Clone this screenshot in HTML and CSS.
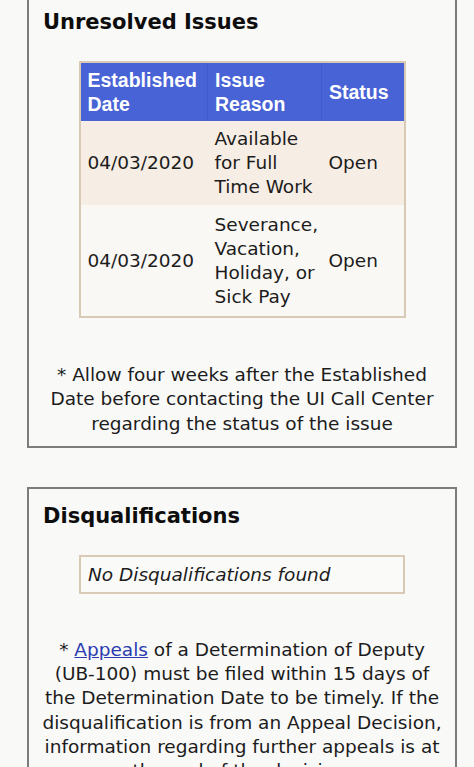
FILE: index.html
```html
<!DOCTYPE html>
<html lang="en">
<head>
<meta charset="utf-8">
<title>Claim Status</title>
<link rel="stylesheet" href="styles.css">
</head>
<body>
<div class="page">
  <section class="panel">
    <h2 class="panel-title">Unresolved Issues</h2>
    <table class="issues">
      <colgroup>
        <col class="c1"><col class="c2"><col class="c3">
      </colgroup>
      <thead>
        <tr>
          <th>Established Date</th>
          <th>Issue Reason</th>
          <th>Status</th>
        </tr>
      </thead>
      <tbody>
        <tr class="odd">
          <td>04/03/2020</td>
          <td>Available for Full Time Work</td>
          <td>Open</td>
        </tr>
        <tr class="even">
          <td>04/03/2020</td>
          <td>Severance, Vacation, Holiday, or Sick Pay</td>
          <td>Open</td>
        </tr>
      </tbody>
    </table>
    <p class="note">* Allow four weeks after the Established Date before contacting the UI Call Center regarding the status of the issue</p>
  </section>

  <section class="panel">
    <h2 class="panel-title">Disqualifications</h2>
    <div class="empty">No Disqualifications found</div>
    <p class="note">* <a href="#">Appeals</a> of a Determination of Deputy (UB-100) must be filed within 15 days of the Determination Date to be timely. If the disqualification is from an Appeal Decision, information regarding further appeals is at the end of the decision.</p>
  </section>
</div>
</body>
</html>
```

FILE: styles.css
```css
html, body {
  margin: 0;
  padding: 0;
  background: #f9f9f8;
}

body {
  font-family: "DejaVu Sans", Verdana, sans-serif;
  font-size: 18.5px;
  color: #1c1c1c;
  overflow: hidden;
}

.page {
  width: 430px;
  margin: -7px 0 0 27px;
  display: flex;
  flex-direction: column;
  gap: 39px;
}

.panel {
  border: 2px solid #7c7c7c;
  padding: 15px 0 10px 0;
}

.panel-title {
  margin: 0 0 0 14px;
  font-family: "DejaVu Sans", Verdana, sans-serif;
  font-weight: bold;
  font-size: 21px;
  line-height: 25px;
  color: #0d0d0d;
}

.issues {
  margin: 26px auto 0;
  width: 325px;
  table-layout: fixed;
  border-collapse: collapse;
  border: 2px solid #d8cab4;
}

.issues col.c1 { width: 128px; }
.issues col.c2 { width: 114px; }
.issues col.c3 { width: 83px; }

.issues th {
  background: #4863d6;
  color: #ffffff;
  font-family: "Liberation Sans", Arial, sans-serif;
  font-weight: bold;
  font-size: 19.5px;
  line-height: 24px;
  text-align: left;
  padding: 5px 7px;
  border-left: 1px solid #415ac9;
  vertical-align: middle;
}

.issues th:first-child { border-left: none; }

.issues td {
  padding: 6px 3px 6px 7px;
  line-height: 24px;
  vertical-align: middle;
  text-align: left;
}

.issues tr.odd td { background: #f6ede4; }
.issues tr.even td { background: #faf8f4; padding-top: 8px; padding-bottom: 7px; }

.note {
  width: 402px;
  margin: 45px auto 0;
  text-align: center;
  line-height: 24.3px;
}

.note a {
  color: #2a3bb0;
  text-decoration: underline;
}

.empty {
  margin: 26px auto 0;
  width: 326px;
  box-sizing: border-box;
  border: 2px solid #d8cab4;
  padding: 6px 7px;
  line-height: 23px;
  font-style: italic;
  background: #fafaf8;
}

.empty + .note {
  margin-top: 44px;
}
```
